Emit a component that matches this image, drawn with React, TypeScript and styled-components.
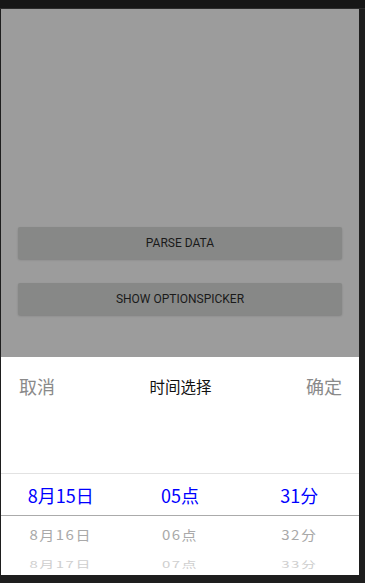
import styled, { createGlobalStyle } from 'styled-components';

const GlobalStyle = createGlobalStyle`
  html, body {
    margin: 0;
    padding: 0;
    background: #1e1e1e;
    height: 100%;
    overflow: hidden;
  }
  body {
    font-family: "Noto Sans CJK SC", Roboto, sans-serif;
  }
`;

const Frame = styled.div`
  width: 365px;
  height: 583px;
  background: #1e1e1e;
  display: flex;
  flex-direction: column;
`;

const TopBar = styled.div`
  height: 8px;
  background: #161616;
  border-bottom: 1px solid #2c2c2c;
`;

const Screen = styled.div`
  margin-left: 1px;
  width: 358px;
  height: 566px;
  display: flex;
  flex-direction: column;
`;

const Backdrop = styled.div`
  flex: 1;
  background: #9c9c9c;
  display: flex;
  flex-direction: column;
  justify-content: flex-end;
  gap: 24px;
  padding: 0 17px 42px;
`;

const ActionButton = styled.div`
  height: 32px;
  background: #878887;
  border-radius: 2px;
  box-shadow: 0 1px 2px rgba(0, 0, 0, 0.18);
  display: flex;
  align-items: center;
  justify-content: center;
  font-family: Roboto, "Liberation Sans", sans-serif;
  font-weight: 400;
  font-size: 12px;
  color: #1a1a1a;
`;

const Sheet = styled.div`
  height: 218px;
  background: #fff;
  display: flex;
  flex-direction: column;
`;

const Header = styled.div`
  height: 58px;
  display: flex;
  align-items: center;
  justify-content: space-between;
  padding: 0 17px 0 18px;
`;

const HeaderButton = styled.span`
  font-size: 18px;
  color: #8a8a8a;
`;

const Title = styled.span`
  font-size: 15.5px;
  color: #111;
`;

const Wheel = styled.div`
  flex: 1;
  display: flex;
  flex-direction: column;
  padding-top: 58px;
  overflow: hidden;
`;

const Row = styled.div<{ $selected?: boolean; $depth?: number }>`
  display: grid;
  grid-template-columns: repeat(3, 1fr);
  flex-shrink: 0;
  height: ${p => (p.$selected ? 41 : p.$depth === 1 ? 36 : 24)}px;
  align-items: center;
  border-top: ${p => (p.$selected ? '1px solid #e2e2e2' : 'none')};
  border-bottom: ${p => (p.$selected ? '1px solid #ababab' : 'none')};
`;

const Cell = styled.span<{ $selected?: boolean; $depth?: number }>`
  text-align: center;
  font-size: ${p => (p.$selected ? 18 : 15)}px;
  color: ${p => (p.$selected ? '#0000ff' : p.$depth === 1 ? '#a9a9a9' : '#cfcfcf')};
  letter-spacing: ${p => (p.$selected ? 0 : 1.5)}px;
  transform: ${p => (p.$selected ? 'none' : p.$depth === 1 ? 'scaleY(0.85)' : 'scaleY(0.6)')};
  line-height: 1;
`;

const rows = [
  ['8月15日', '05点', '31分'],
  ['8月16日', '06点', '32分'],
  ['8月17日', '07点', '33分'],
];

export default function App() {
  return (
    <>
      <GlobalStyle />
      <Frame>
        <TopBar />
        <Screen>
          <Backdrop>
            <ActionButton>PARSE DATA</ActionButton>
            <ActionButton>SHOW OPTIONSPICKER</ActionButton>
          </Backdrop>
          <Sheet>
            <Header>
              <HeaderButton>取消</HeaderButton>
              <Title>时间选择</Title>
              <HeaderButton>确定</HeaderButton>
            </Header>
            <Wheel>
              {rows.map((r, i) => (
                <Row key={i} $selected={i === 0} $depth={i}>
                  {r.map(t => (
                    <Cell key={t} $selected={i === 0} $depth={i}>
                      {t}
                    </Cell>
                  ))}
                </Row>
              ))}
            </Wheel>
          </Sheet>
        </Screen>
      </Frame>
    </>
  );
}
